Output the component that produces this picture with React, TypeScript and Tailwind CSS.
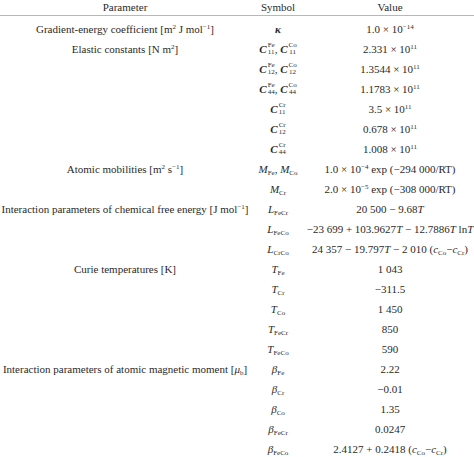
import type { ReactNode } from 'react';

const Sub = ({ children }: { children: ReactNode }) => (
  <sub className="text-[7px] not-italic font-normal relative top-[2px]">{children}</sub>
);
const Sup = ({ children }: { children: ReactNode }) => (
  <sup className="text-[7px] not-italic font-normal relative top-[-4px]">{children}</sup>
);

// C with stacked super/subscript, e.g. C^Fe_11
const Cij = ({ sup, sub }: { sup: string; sub: string }) => (
  <span className="inline-flex items-center">
    <span className="italic font-bold">C</span>
    <span className="inline-flex flex-col text-[7px] leading-[7px] not-italic font-normal ml-[1px]">
      <span>{sup}</span>
      <span>{sub}</span>
    </span>
  </span>
);

const Sym = ({ s, sub }: { s: string; sub: string }) => (
  <span>
    <span className="italic">{s}</span>
    <Sub>{sub}</Sub>
  </span>
);

const It = ({ children }: { children: ReactNode }) => <span className="italic">{children}</span>;

const Ten = ({ e }: { e: string }) => (
  <span>
    10<Sup>{e}</Sup>
  </span>
);

type Row = { param?: ReactNode; symbol: ReactNode; value: ReactNode };

const ROWS: Row[] = [
  {
    param: (
      <span>
        Gradient-energy coefficient [m<Sup>2</Sup> J mol<Sup>−1</Sup>]
      </span>
    ),
    symbol: <span className="italic font-bold">κ</span>,
    value: (
      <span>
        1.0 × <Ten e="−14" />
      </span>
    ),
  },
  {
    param: (
      <span>
        Elastic constants [N m<Sup>2</Sup>]
      </span>
    ),
    symbol: (
      <span>
        <Cij sup="Fe" sub="11" />, <Cij sup="Co" sub="11" />
      </span>
    ),
    value: (
      <span>
        2.331 × <Ten e="11" />
      </span>
    ),
  },
  {
    symbol: (
      <span>
        <Cij sup="Fe" sub="12" />, <Cij sup="Co" sub="12" />
      </span>
    ),
    value: (
      <span>
        1.3544 × <Ten e="11" />
      </span>
    ),
  },
  {
    symbol: (
      <span>
        <Cij sup="Fe" sub="44" />, <Cij sup="Co" sub="44" />
      </span>
    ),
    value: (
      <span>
        1.1783 × <Ten e="11" />
      </span>
    ),
  },
  {
    symbol: <Cij sup="Cr" sub="11" />,
    value: (
      <span>
        3.5 × <Ten e="11" />
      </span>
    ),
  },
  {
    symbol: <Cij sup="Cr" sub="12" />,
    value: (
      <span>
        0.678 × <Ten e="11" />
      </span>
    ),
  },
  {
    symbol: <Cij sup="Cr" sub="44" />,
    value: (
      <span>
        1.008 × <Ten e="11" />
      </span>
    ),
  },
  {
    param: (
      <span>
        Atomic mobilities [m<Sup>2</Sup> s<Sup>−1</Sup>]
      </span>
    ),
    symbol: (
      <span>
        <Sym s="M" sub="Fe" />, <Sym s="M" sub="Co" />
      </span>
    ),
    value: (
      <span>
        1.0 × <Ten e="−4" /> exp (−294 000/RT)
      </span>
    ),
  },
  {
    symbol: <Sym s="M" sub="Cr" />,
    value: (
      <span>
        2.0 × <Ten e="−5" /> exp (−308 000/RT)
      </span>
    ),
  },
  {
    param: (
      <span>
        Interaction parameters of chemical free energy [J mol<Sup>−1</Sup>]
      </span>
    ),
    symbol: <Sym s="L" sub="FeCr" />,
    value: (
      <span>
        20 500 − 9.68<It>T</It>
      </span>
    ),
  },
  {
    symbol: <Sym s="L" sub="FeCo" />,
    value: (
      <span>
        −23 699 + 103.9627<It>T</It> − 12.7886<It>T</It> ln<It>T</It>
      </span>
    ),
  },
  {
    symbol: <Sym s="L" sub="CrCo" />,
    value: (
      <span>
        24 357 − 19.797<It>T</It> − 2 010 (<Sym s="c" sub="Co" />−<Sym s="c" sub="Cr" />)
      </span>
    ),
  },
  { param: <span>Curie temperatures [K]</span>, symbol: <Sym s="T" sub="Fe" />, value: '1 043' },
  { symbol: <Sym s="T" sub="Cr" />, value: '−311.5' },
  { symbol: <Sym s="T" sub="Co" />, value: '1 450' },
  { symbol: <Sym s="T" sub="FeCr" />, value: '850' },
  { symbol: <Sym s="T" sub="FeCo" />, value: '590' },
  {
    param: (
      <span>
        Interaction parameters of atomic magnetic moment [<Sym s="μ" sub="b" />]
      </span>
    ),
    symbol: <Sym s="β" sub="Fe" />,
    value: '2.22',
  },
  { symbol: <Sym s="β" sub="Cr" />, value: '−0.01' },
  { symbol: <Sym s="β" sub="Co" />, value: '1.35' },
  { symbol: <Sym s="β" sub="FeCr" />, value: '0.0247' },
  {
    symbol: <Sym s="β" sub="FeCo" />,
    value: (
      <span>
        2.4127 + 0.2418 (<Sym s="c" sub="Co" />−<Sym s="c" sub="Cr" />)
      </span>
    ),
  },
];

export default function App() {
  return (
    <div className="w-[474px] h-[457px] overflow-hidden bg-white text-[#2a2a2a] text-[11px] font-['Liberation_Serif','Times_New_Roman',serif]">
      <div className="grid grid-cols-[250px_56px_168px] h-[16px] items-center border-b-[1.5px] border-[#b8b8b8] leading-none">
        <div className="text-center">Parameter</div>
        <div className="text-center">Symbol</div>
        <div className="text-center">Value</div>
      </div>
      <div className="pt-[3px]">
        {ROWS.map((r, i) => (
          <div
            key={i}
            className="grid grid-cols-[250px_56px_168px] h-[20px] items-center leading-none"
          >
            <div className="text-center whitespace-nowrap">{r.param}</div>
            <div className="text-center whitespace-nowrap">{r.symbol}</div>
            <div className="text-center whitespace-nowrap">{r.value}</div>
          </div>
        ))}
      </div>
    </div>
  );
}
